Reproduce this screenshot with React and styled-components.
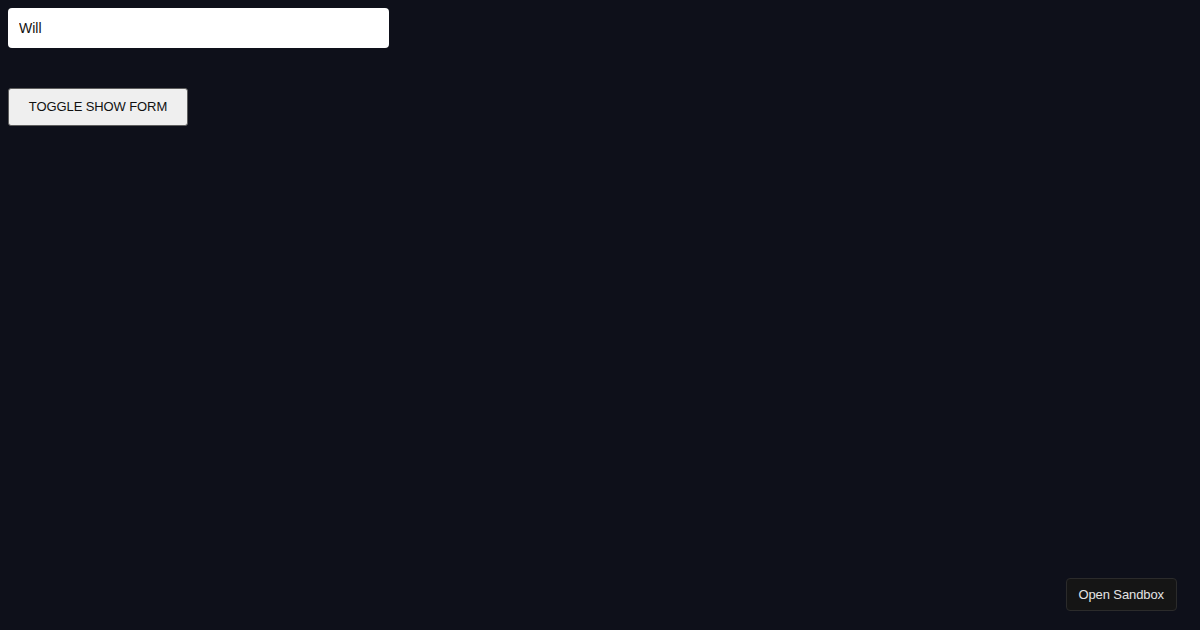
import styled, { createGlobalStyle } from "styled-components";

const GlobalStyle = createGlobalStyle`
    html, body {
        margin: 0;
        background: #0e101a;
    }
    body {
        padding: 8px;
        font-family: "Liberation Sans", Arial, sans-serif;
    }
`

const Page = styled.div`
    display: flex;
    flex-direction: column;
    align-items: flex-start;
    gap: 40px;
    min-height: calc(100vh - 16px);
`

const NameInput = styled.input`
    box-sizing: border-box;
    width: 381px;
    height: 40px;
    padding: 0 11px;
    border: none;
    border-radius: 4px;
    background: #ffffff;
    color: #111111;
    font-family: "Liberation Sans", Arial, sans-serif;
    font-size: 14px;
    outline: none;
`

const ToggleButton = styled.button`
    box-sizing: border-box;
    width: 180px;
    height: 38px;
    padding: 0 0 2px;
    border: 1px solid #5e5e5e;
    border-radius: 3px;
    background: #efefef;
    color: #111111;
    font-family: "Liberation Sans", Arial, sans-serif;
    font-size: 13px;
    letter-spacing: -0.1px;
    text-transform: uppercase;
    cursor: pointer;
`

const SandboxLink = styled.a`
    position: fixed;
    right: 23px;
    bottom: 19px;
    box-sizing: border-box;
    height: 33px;
    padding: 0 12px 0 11px;
    display: flex;
    align-items: center;
    border: 1px solid #2b2b2b;
    border-radius: 4px;
    background: #151515;
    color: #e4e4e4;
    font-family: "Liberation Sans", Arial, sans-serif;
    font-size: 13px;
    letter-spacing: -0.1px;
    text-decoration: none;
`

const App = () => {
    return (
        <>
            <GlobalStyle />
            <Page>
                <NameInput defaultValue="Will" />
                <ToggleButton>Toggle show form</ToggleButton>
            </Page>
            <SandboxLink href="#">Open Sandbox</SandboxLink>
        </>
    )
}

export default App;
